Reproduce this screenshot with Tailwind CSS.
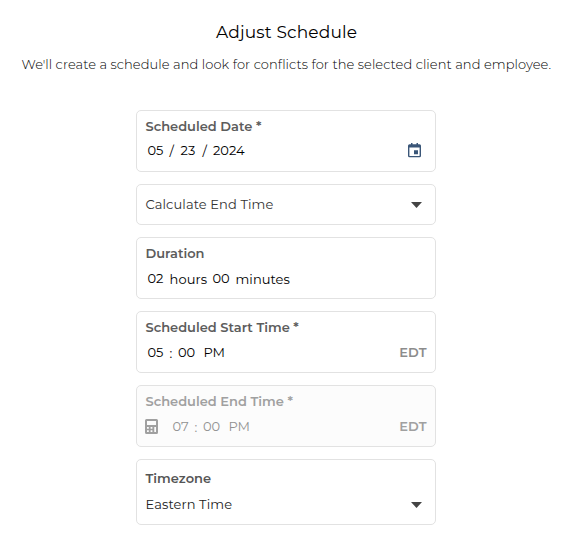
<!DOCTYPE html>
<html lang="en"><head><meta charset="utf-8"><title>Adjust Schedule</title>
<script src="https://cdn.jsdelivr.net/npm/@tailwindcss/browser@4"></script></head>
<body class="bg-white text-black font-[Montserrat,Inter,sans-serif] text-[13px] leading-4">
<main class="w-[569px] h-[555px] overflow-hidden flex flex-col pl-[136px] pt-[22px] whitespace-nowrap">
<h1 class="ml-[80px] text-[17px] leading-5 tracking-[0.16px]">Adjust Schedule</h1>
<p class="-ml-[114.5px] mt-[14px] mb-[38px] font-light tracking-[0.08px] text-black">We'll create a schedule and look for conflicts for the selected client and employee.</p>
<form class="w-[300px] flex flex-col gap-3">
<div class="h-[62px] border border-[#e2e2e2] rounded-[5px] px-[8.5px] pt-[7px]">
<label class="block font-semibold text-[#5c5c5c]">Scheduled Date *</label>
<div class="flex mt-2 pl-[2px]"><span class="w-[22px]">05</span><span class="w-[11px] mt-px">/</span><span class="w-[22px]">23</span><span class="w-[10.5px] mt-px">/</span><span>2024</span>
<svg class="ml-auto mr-[5.5px] mt-px w-[13px] h-[15px]" viewBox="0 0 13 15"><path fill="#3a5678" fill-rule="evenodd" d="M3 0h1.5v1.3h4V0H10v1.3h1.5Q13 1.3 13 2.8v10q0 1.5-1.5 1.5h-10Q0 14.3 0 12.8v-10q0-1.5 1.5-1.5H3zM1.4 4.4v8q0 .6.6.6h9q.6 0 .6-.6v-8zM6 7.2h4v4H6z"/></svg></div></div>
<div class="h-[41px] border border-[#e2e2e2] rounded-[5px] px-[8.5px] flex items-center justify-between text-[#333]"><span class="-mt-px tracking-[0.1px]">Calculate End Time</span><svg class="mr-[4.5px] mt-px w-[11px] h-[6px]" viewBox="0 0 11 6"><path fill="#444" d="M0 0h11L5.5 6z"/></svg></div>
<div class="h-[62px] border border-[#e2e2e2] rounded-[5px] px-[8.5px] pt-[7px]">
<label class="block font-semibold text-[#5c5c5c]">Duration</label>
<div class="flex mt-[9px] pl-[2px]"><span class="w-[22px]">02</span><span class="w-[43px] mt-px tracking-[0.1px]">hours</span><span class="w-[23px]">00</span><span class="mt-px tracking-[0.05px]">minutes</span></div></div>
<div class="h-[62px] border border-[#e2e2e2] rounded-[5px] px-[8.5px] pt-[7px]">
<label class="block font-semibold text-[#5c5c5c]">Scheduled Start Time *</label>
<div class="flex mt-[9px] pl-[2px]"><span class="w-[22px]">05</span><span class="w-[8.5px] mt-px">:</span><span class="w-[25.5px]">00</span><span class="-tracking-[0.1px]">PM</span><span class="ml-auto font-semibold text-[#8c8c8c]">EDT</span></div></div>
<div class="h-[62px] border border-[#e2e2e2] rounded-[5px] bg-[#fcfcfc] px-[8.5px] pt-[7px] text-[#a0a0a0]">
<label class="block font-semibold">Scheduled End Time *</label>
<div class="flex mt-[9px]"><svg class="-ml-[0.5px] mt-px w-[13px] h-[15px] mr-[14.5px]" viewBox="0 0 13 15"><path fill="#a0a0a0" fill-rule="evenodd" d="M1.5 0h10Q13 0 13 1.5v12q0 1.5-1.5 1.5h-10Q0 15 0 13.5v-12Q0 0 1.5 0M2 2v4h9V2zM2 8v1.7h1.8V8zm3.6 0v1.7h1.8V8zM9.3 8v5H11V8zM2 11.3V13h1.8v-1.7zm3.6 0V13h1.8v-1.7z"/></svg><span class="w-[22px] text-[#919191]">07</span><span class="w-[8.5px] mt-px text-[#919191]">:</span><span class="w-[25.5px] text-[#919191]">00</span><span class="-tracking-[0.1px] text-[#919191]">PM</span><span class="ml-auto font-semibold">EDT</span></div></div>
<div class="h-[66px] border border-[#e2e2e2] rounded-[5px] px-[8.5px] pt-[10px]">
<label class="block font-semibold text-[#555]">Timezone</label>
<div class="flex items-center justify-between mt-[10px] text-[#222]"><span class="tracking-[0.1px]">Eastern Time</span><svg class="mr-[4.5px] mt-px w-[11px] h-[6px]" viewBox="0 0 11 6"><path fill="#444" d="M0 0h11L5.5 6z"/></svg></div></div>
</form></main></body></html></script>
